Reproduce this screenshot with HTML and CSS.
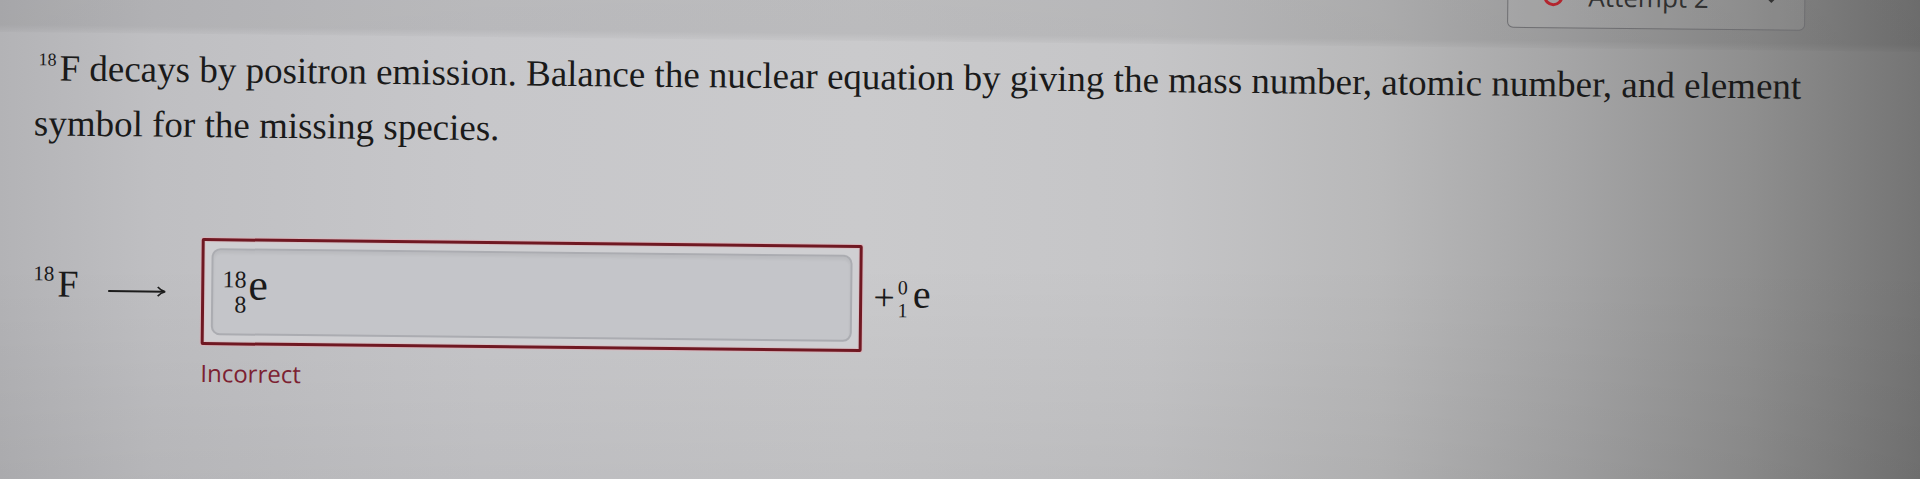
FILE: index.html
```html
<!DOCTYPE html>
<html lang="en">
<head>
<meta charset="utf-8">
<title>Nuclear equation</title>
<link rel="stylesheet" href="styles.css">
</head>
<body>
<div class="sheet">
  <header class="topbar">
    <div class="attempt">
      <svg class="attempt-icon" width="22" height="22" viewBox="0 0 22 22"><circle cx="11" cy="11" r="8.5" fill="none" stroke="#b3262f" stroke-width="3"/></svg>
      <span class="attempt-label">Attempt 2</span>
      <svg class="attempt-chev" width="14" height="9" viewBox="0 0 14 9"><path d="M1.5 1.5 L7 7 L12.5 1.5" fill="none" stroke="#333" stroke-width="2.2"/></svg>
    </div>
  </header>

  <p class="question"><sup class="q-mass">18</sup>F decays by positron emission. Balance the nuclear equation by giving the mass number, atomic number, and element symbol for the missing species.</p>

  <div class="work">
    <div class="equation">
      <div class="nuclide">
        <span class="nuc-mass">18</span><span class="nuc-sym">F</span>
      </div>
      <svg class="arrow" width="60" height="14" viewBox="0 0 60 14">
        <path d="M1 7 H57" stroke="#1c1c1c" stroke-width="2" fill="none"/>
        <path d="M50.5 2.5 Q53.5 6 58 7 Q53.5 8 50.5 11.5" stroke="#1c1c1c" stroke-width="1.6" fill="none"/>
      </svg>
      <div class="answer">
        <div class="field">
          <span class="script"><span>18</span><span>8</span></span><span class="field-sym">e</span>
        </div>
      </div>
      <span class="plus">+</span>
      <span class="script small"><span>0</span><span>1</span></span>
      <span class="prod-sym">e</span>
    </div>
    <div class="feedback">Incorrect</div>
  </div>
</div>
</body>
</html>
```

FILE: styles.css
```css
html, body {
  margin: 0;
  height: 479px;
  overflow: hidden;
}

body {
  background:
    linear-gradient(180deg, rgba(0,0,0,0) 55%, rgba(0,0,0,0.05) 100%),
    linear-gradient(90deg, #b3b3b6 0%, #bfbfc2 8%, #c7c7ca 25%, #cacacc 45%, #c5c5c7 60%, #b8b8b9 72%, #a4a4a5 82%, #8f8f8f 91%, #747474 100%);
  color: #1a1a1a;
  font-family: "Liberation Serif", "Times New Roman", serif;
}

.sheet {
  height: 479px;
  transform: rotate(0.6deg);
  transform-origin: 960px 240px;
}

/* top bar */
.topbar {
  margin: -20px -40px 0;
  height: 62px;
  padding-right: 157px;
  display: flex;
  justify-content: flex-end;
  background: linear-gradient(180deg, rgba(0,0,0,0.07) 0%, rgba(0,0,0,0.075) 88%, rgba(0,0,0,0.02) 100%);
}

.attempt {
  box-sizing: border-box;
  width: 298px;
  height: 56px;
  margin-top: -14px;
  padding: 0 26px 8px 34px;
  display: flex;
  align-items: center;
  border: 1px solid #6e6e71;
  border-radius: 6px;
  background: rgba(255,255,255,0.07);
  font-family: "Open Sans", "Liberation Sans", sans-serif;
  font-size: 26px;
  line-height: 1;
  color: #303030;
}

.attempt-label {
  margin-left: 24px;
}

.attempt-chev {
  margin-left: auto;
}

/* question text */
.question {
  margin: 8px 0 0;
  padding-left: 33px;
  max-width: 1800px;
  font-size: 37px;
  line-height: 55px;
}

.q-mass {
  font-size: 18px;
  line-height: 0;
  vertical-align: 15px;
  margin-left: 4px;
  margin-right: 3px;
}

/* equation */
.work {
  margin-top: 86px;
  padding-left: 34px;
}

.equation {
  display: flex;
  align-items: center;
  height: 107px;
}

.nuclide {
  display: flex;
  align-items: flex-start;
  margin-bottom: 13px;
}

.nuc-mass {
  font-size: 21px;
  line-height: 1;
  margin-top: -1px;
}

.nuc-sym {
  font-size: 38px;
  line-height: 1;
  margin-left: 3px;
}

.arrow {
  margin-left: 29px;
}

.answer {
  box-sizing: border-box;
  width: 661px;
  height: 107px;
  margin-left: 34px;
  padding: 7px;
  border: 3px solid #701822;
  border-radius: 2px;
  background: #cfcfd2;
  box-shadow: 0 0 0 1px rgba(226,172,180,0.6), inset 0 0 0 1px rgba(226,172,180,0.45);
}

.field {
  box-sizing: border-box;
  height: 100%;
  display: flex;
  align-items: center;
  padding-left: 9px;
  border: 2px solid #abacb1;
  border-radius: 9px;
  background: #c4c5c9;
  box-shadow: inset 0 3px 3px rgba(0,0,0,0.05);
}

.script {
  display: flex;
  flex-direction: column;
  align-items: flex-end;
  font-size: 24px;
  line-height: 25px;
}

.script.small {
  font-size: 20px;
  line-height: 23px;
  margin-left: 3px;
}

.field-sym {
  font-size: 44px;
  line-height: 1;
  margin-left: 2px;
  margin-bottom: 13px;
}

.plus {
  font-size: 38px;
  line-height: 1;
  margin-left: 11px;
  margin-bottom: 4px;
}

.prod-sym {
  font-size: 40px;
  line-height: 1;
  margin-left: 5px;
  margin-bottom: 10px;
}

.feedback {
  margin: 12px 0 0 168px;
  font-family: "Open Sans", "Liberation Sans", sans-serif;
  font-size: 24px;
  line-height: 32px;
  color: #7c2131;
}
```
